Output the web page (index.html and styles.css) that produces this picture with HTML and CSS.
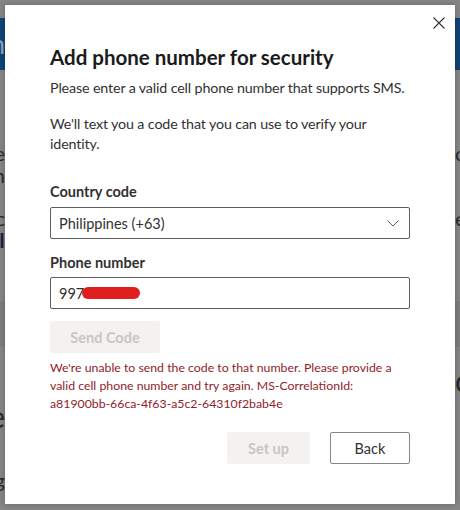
FILE: index.html
```html
<!DOCTYPE html>
<html lang="en">
<head>
  <meta charset="UTF-8">
  <meta name="viewport" content="width=device-width, initial-scale=1.0">
  <title>Add phone number for security</title>
  <link rel="stylesheet" href="styles.css">
</head>
<body>
  <div class="page">
    <div class="page-top"></div>
    <div class="page-header">
      <span class="edge-left big">n</span>
    </div>
    <div class="page-body">
      <div class="row r1"><span class="edge-left">e</span><span class="edge-right">cr</span></div>
      <div class="row r2"><span class="edge-left">n</span></div>
      <div class="row r3"><span class="edge-left">c</span><span class="edge-right">e</span></div>
      <div class="row r4"><span class="edge-left dark">I</span></div>
      <div class="band"></div>
      <div class="row r5"><span class="edge-right big">d</span></div>
      <div class="row r6"><span class="edge-left big">e</span></div>
      <div class="row r7"><span class="edge-left">g</span></div>
    </div>
  </div>

  <div class="dialog">
    <button class="close" aria-label="Close">
      <svg width="12" height="12" viewBox="0 0 12 12"><path d="M0.5 0.5 L11.5 11.5 M11.5 0.5 L0.5 11.5" stroke="#333" stroke-width="1.1" fill="none"/></svg>
    </button>

    <h1>Add phone number for security</h1>
    <p class="intro first">Please enter a valid cell phone number that supports SMS.</p>
    <p class="intro">We'll text you a code that you can use to verify your identity.</p>

    <label class="field-label country">Country code</label>
    <div class="select">
      <span>Philippines (+63)</span>
      <svg width="12" height="7" viewBox="0 0 12 7"><path d="M0.5 0.5 L6 6 L11.5 0.5" stroke="#605e5c" stroke-width="1" fill="none"/></svg>
    </div>

    <label class="field-label">Phone number</label>
    <div class="input">
      <span>997</span><span class="redact"></span>
    </div>

    <button class="btn disabled send">Send Code</button>

    <p class="error">We're unable to send the code to that number. Please provide a valid cell phone number and try again. MS-CorrelationId: a81900bb-66ca-4f63-a5c2-64310f2bab4e</p>

    <div class="actions">
      <button class="btn disabled">Set up</button>
      <button class="btn outline">Back</button>
    </div>
  </div>
</body>
</html>
```

FILE: styles.css
```css
html, body {
  margin: 0;
  padding: 0;
}
body {
  width: 460px;
  height: 510px;
  overflow: hidden;
  background-color: #868686;
  font-family: Lato, "Noto Sans", sans-serif;
  color: #323130;
}
.page {
  height: 510px;
  display: flex;
  flex-direction: column;
}
.page-top {
  height: 18px;
}
.page-header {
  height: 52px;
  background-color: #104477;
  display: flex;
  align-items: center;
}
.page-body {
  flex: 1;
  display: flex;
  flex-direction: column;
}
.row {
  display: flex;
  justify-content: space-between;
  align-items: center;
  height: 22px;
  font-size: 20px;
  color: #2a2a2a;
}
.r1 { margin-top: 72px; }
.r3 { margin-top: 21px; }
.r5 { margin-top: 22px; }
.r6 { margin-top: 10px; height: 30px; }
.r7 { margin-top: 38px; }
.band {
  height: 46px;
  margin-top: 50px;
  background-color: #7d7d7d;
}
.edge-left {
  width: 5px;
  overflow: hidden;
  direction: rtl;
  white-space: nowrap;
}
.edge-right {
  width: 5px;
  overflow: hidden;
  white-space: nowrap;
  margin-left: auto;
}
.edge-left.big, .edge-right.big {
  font-size: 30px;
}
.page-header .edge-left {
  color: #8aa6c2;
  font-size: 26px;
}
.edge-left.dark {
  color: #2c1a40;
  font-weight: 700;
}

.dialog {
  position: absolute;
  top: 5px;
  left: 5px;
  width: 450px;
  height: 499px;
  box-sizing: border-box;
  background-color: #fff;
  padding: 38px 45px 0 45px;
  box-shadow: 0 0 6px rgba(0,0,0,0.25);
}
.close {
  position: absolute;
  top: 6px;
  right: 4px;
  width: 24px;
  height: 24px;
  padding: 0;
  border: none;
  background: none;
  display: flex;
  align-items: center;
  justify-content: center;
}
h1 {
  margin: 0;
  font-size: 20.5px;
  line-height: 28px;
  font-weight: 700;
  color: #1b1b1b;
}
.intro {
  margin: 16px 0 0 0;
  font-size: 14.3px;
  letter-spacing: -0.15px;
  line-height: 20px;
  color: #323130;
}
.intro.first {
  margin-top: 7px;
  white-space: nowrap;
}
.field-label {
  display: block;
  font-size: 14.5px;
  font-weight: 700;
  line-height: 20px;
  margin-top: 14px;
  margin-bottom: 4px;
}
.field-label.country {
  margin-top: 28px;
  margin-bottom: 5px;
}
.select, .input {
  height: 32px;
  box-sizing: border-box;
  border: 1px solid #605e5c;
  border-radius: 2px;
  display: flex;
  align-items: center;
  padding: 0 8px;
  font-size: 14.5px;
  color: #323130;
}
.select {
  justify-content: space-between;
}
.select svg {
  margin-right: 2px;
}
.redact {
  display: inline-block;
  width: 58px;
  height: 12px;
  border-radius: 6px;
  background-color: #e01e1e;
  margin-left: -2px;
}
.btn {
  height: 32px;
  box-sizing: border-box;
  border-radius: 2px;
  font-family: inherit;
  font-size: 14.5px;
  font-weight: 700;
  padding: 0;
  white-space: nowrap;
}
.btn.disabled {
  background-color: #f3f2f1;
  border: none;
  color: #c8c6c4;
}
.btn.outline {
  background-color: #fff;
  border: 1px solid #8a8886;
  color: #323130;
  font-weight: 400;
}
.send {
  display: block;
  width: 110px;
  margin-top: 12px;
}
.error {
  margin: 6px 0 0 0;
  font-size: 12.3px;
  line-height: 18px;
  color: #901d2b;
}
.actions {
  display: flex;
  justify-content: flex-end;
  gap: 20px;
  margin-top: 19px;
}
.actions .disabled {
  width: 83px;
}
.actions .outline {
  width: 80px;
}
```
